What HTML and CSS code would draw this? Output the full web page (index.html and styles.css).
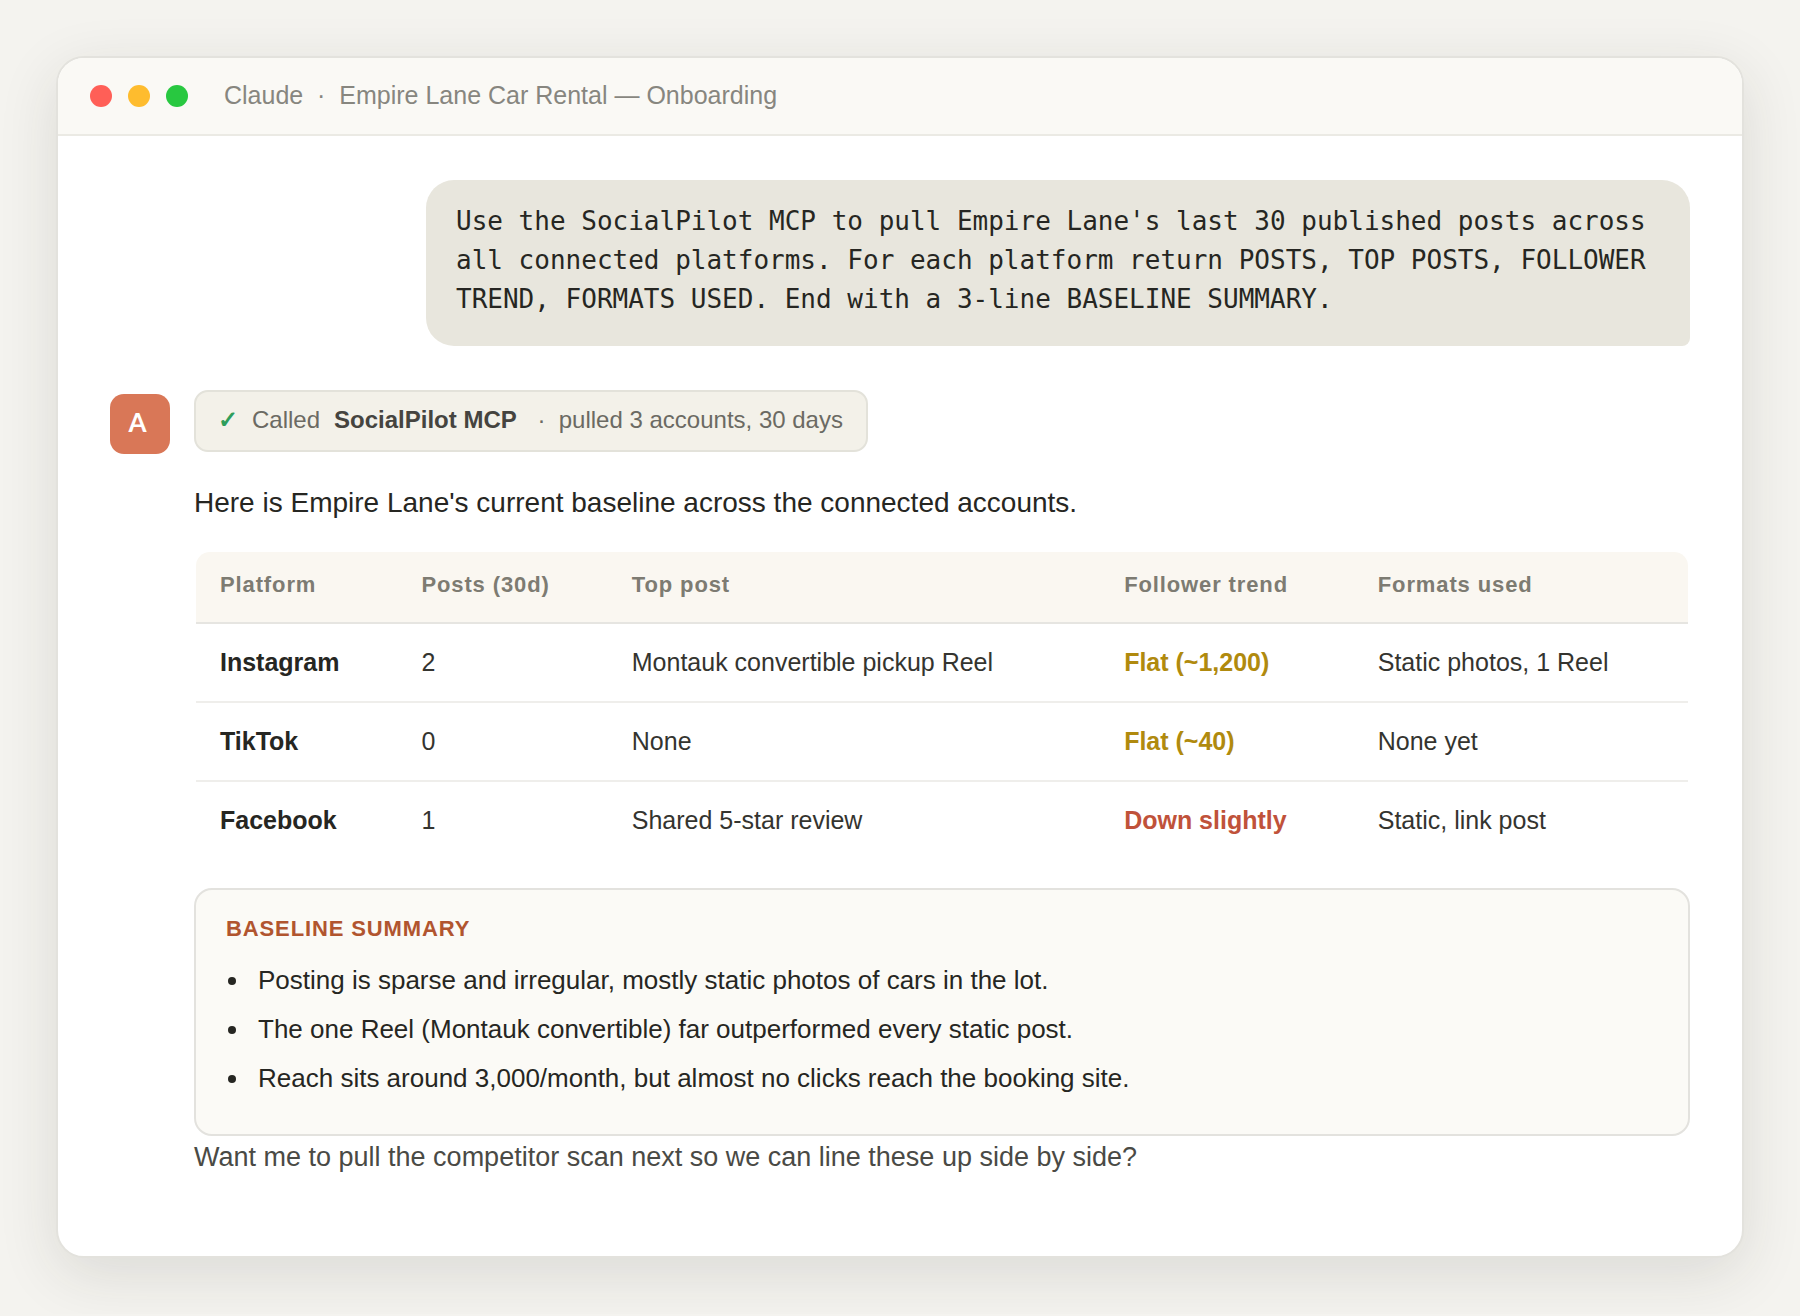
FILE: index.html
```html
<!DOCTYPE html>
<html lang="en">
<head>
<meta charset="utf-8">
<meta name="viewport" content="width=device-width, initial-scale=1">
<title>Claude · Empire Lane Car Rental — Onboarding</title>
<link rel="stylesheet" href="styles.css">
</head>
<body>
<main class="window">
  <header class="titlebar">
    <div class="lights" aria-hidden="true">
      <span class="light light-close"></span>
      <span class="light light-minimize"></span>
      <span class="light light-zoom"></span>
    </div>
    <h1 class="title">Claude &nbsp;·&nbsp; Empire Lane Car Rental — Onboarding</h1>
  </header>

  <div class="chat">
    <p class="prompt">Use the SocialPilot MCP to pull Empire Lane's last 30 published posts across all connected platforms. For each platform return POSTS, TOP POSTS, FOLLOWER TREND, FORMATS USED. End with a 3-line BASELINE SUMMARY.</p>

    <article class="reply">
      <div class="avatar">A</div>
      <div class="reply-body">
        <div class="tool-call">
          <span class="check">✓</span>
          <span>Called</span>
          <strong>SocialPilot MCP</strong>
          <span>&nbsp;·&nbsp; pulled 3 accounts, 30 days</span>
        </div>

        <p class="intro">Here is Empire Lane's current baseline across the connected accounts.</p>

        <div class="table-wrap">
          <table class="accounts">
            <colgroup>
              <col class="col-platform">
              <col class="col-posts">
              <col class="col-top">
              <col class="col-trend">
              <col class="col-formats">
            </colgroup>
            <thead>
              <tr>
                <th scope="col">Platform</th>
                <th scope="col">Posts (30d)</th>
                <th scope="col">Top post</th>
                <th scope="col">Follower trend</th>
                <th scope="col">Formats used</th>
              </tr>
            </thead>
            <tbody>
              <tr>
                <td class="platform">Instagram</td>
                <td>2</td>
                <td>Montauk convertible pickup Reel</td>
                <td class="trend-flat">Flat (~1,200)</td>
                <td>Static photos, 1 Reel</td>
              </tr>
              <tr>
                <td class="platform">TikTok</td>
                <td>0</td>
                <td>None</td>
                <td class="trend-flat">Flat (~40)</td>
                <td>None yet</td>
              </tr>
              <tr>
                <td class="platform">Facebook</td>
                <td>1</td>
                <td>Shared 5-star review</td>
                <td class="trend-down">Down slightly</td>
                <td>Static, link post</td>
              </tr>
            </tbody>
          </table>
        </div>

        <section class="summary">
          <h2 class="summary-title">BASELINE SUMMARY</h2>
          <ul class="summary-list">
            <li>Posting is sparse and irregular, mostly static photos of cars in the lot.</li>
            <li>The one Reel (Montauk convertible) far outperformed every static post.</li>
            <li>Reach sits around 3,000/month, but almost no clicks reach the booking site.</li>
          </ul>
        </section>

        <p class="follow-up">Want me to pull the competitor scan next so we can line these up side by side?</p>
      </div>
    </article>
  </div>
</main>
</body>
</html>
```
FILE: styles.css
```css
* {
  box-sizing: border-box;
}

body {
  margin: 0;
  padding: 56px;
  background: #f4f3ef;
  color: #262622;
  font-family: "Liberation Sans", Arial, sans-serif;
}

h1,
h2,
p,
ul {
  margin: 0;
}

.window {
  overflow: hidden;
  background: #fff;
  border: 2px solid #e3e2dd;
  border-radius: 28px;
  box-shadow: 0 16px 60px rgba(40, 40, 30, 0.12);
}

/* Title bar */

.titlebar {
  display: flex;
  align-items: center;
  gap: 36px;
  padding: 22px 32px;
  background: #faf9f5;
  border-bottom: 2px solid #ebeae4;
}

.lights {
  display: flex;
  gap: 16px;
}

.light {
  width: 22px;
  height: 22px;
  border-radius: 50%;
}

.light-close {
  background: #ff5f57;
}

.light-minimize {
  background: #febc2e;
}

.light-zoom {
  background: #28c840;
}

.title {
  padding-bottom: 2px;
  color: #87867f;
  font-size: 25px;
  font-weight: 400;
  line-height: 30px;
}

/* Conversation */

.chat {
  display: flex;
  flex-direction: column;
  gap: 44px;
  padding: 44px 52px 78px;
}

.prompt {
  align-self: flex-end;
  max-width: 80%;
  padding: 22px 30px 27px;
  background: #e8e6dd;
  border-radius: 28px 28px 8px 28px;
  font-family: "DejaVu Sans Mono", monospace;
  font-size: 26px;
  line-height: 39px;
}

.reply {
  display: flex;
  align-items: flex-start;
  gap: 24px;
}

.avatar {
  display: grid;
  flex: none;
  place-items: center;
  width: 60px;
  height: 60px;
  margin-top: 4px;
  padding: 0 5px 4px 0;
  background: #d97757;
  border-radius: 14px;
  color: #fff;
  font-family: Lato, sans-serif;
  font-size: 26px;
  font-weight: 700;
}

.reply-body {
  flex: 1;
  min-width: 0;
}

.tool-call {
  display: flex;
  align-items: center;
  gap: 14px;
  width: fit-content;
  padding: 13px 23px 15px 22px;
  background: #f3f1e9;
  border: 2px solid #e3e2da;
  border-radius: 14px;
  color: #6b6a63;
  font-size: 24px;
  line-height: 30px;
}

.tool-call strong {
  color: #45443f;
}

.check {
  color: #2e9e5b;
  font-weight: 700;
}

.intro {
  margin: 29px 0 25px;
  font-size: 28px;
  line-height: 44px;
}

/* Accounts table */

.table-wrap {
  margin-bottom: 27px;
  padding: 2px;
}

.accounts {
  width: 100%;
  table-layout: fixed;
  border-collapse: separate;
  border-spacing: 0;
  color: #34342f;
  font-size: 25px;
  line-height: 38px;
  text-align: left;
}

.col-platform {
  width: 13.5%;
}

.col-posts {
  width: 14.1%;
}

.col-top {
  width: 33%;
}

.col-trend {
  width: 17%;
}

.accounts th {
  padding: 16px 24px 20px;
  background: #faf7f1;
  border-bottom: 2px solid #e6e5e1;
  color: #7d7b72;
  font-size: 22px;
  font-weight: 700;
  letter-spacing: 0.04em;
  line-height: 34px;
}

.accounts th:first-child {
  border-top-left-radius: 14px;
}

.accounts th:last-child {
  border-top-right-radius: 14px;
}

.accounts td {
  padding: 19px 24px 20px;
  border-bottom: 2px solid #efeeeb;
}

.accounts tr:last-child td {
  border-bottom: 0;
}

.accounts .platform {
  color: #262622;
  font-weight: 700;
}

.accounts .trend-flat {
  color: #b08a0e;
  font-weight: 700;
}

.accounts .trend-down {
  color: #c0523a;
  font-weight: 700;
}

/* Summary card */

.summary {
  padding: 22px 30px 26px;
  background: #fbfaf6;
  border: 2px solid #e3e2de;
  border-radius: 18px;
}

.summary-title {
  margin-bottom: 16px;
  color: #b1552f;
  font-size: 22px;
  letter-spacing: 0.04em;
  line-height: 33px;
}

.summary-list {
  padding-left: 25px;
  font-size: 26px;
  line-height: 39px;
}

.summary-list li {
  margin-bottom: 10px;
  padding-left: 7px;
}

.follow-up {
  color: #4a4a45;
  font-size: 27px;
  line-height: 42px;
}
```
